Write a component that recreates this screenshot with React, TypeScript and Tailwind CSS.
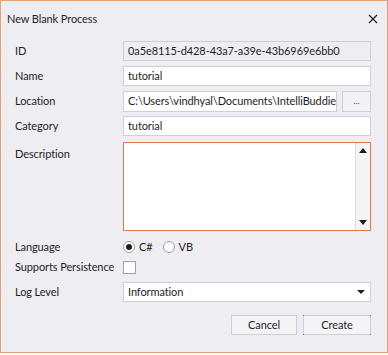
import React from "react";

const font = { fontFamily: 'Lato, "Noto Sans", sans-serif' };

function Label({ children, top = false }: { children: React.ReactNode; top?: boolean }) {
  return (
    <div className={`w-[108px] shrink-0 whitespace-nowrap ${top ? "pt-[4px]" : "flex items-center"}`}>
      {children}
    </div>
  );
}

function Field({ value, disabled = false, className = "" }: { value: string; disabled?: boolean; className?: string }) {
  return (
    <div
      className={`h-[20px] border border-[#ccced8] flex items-center pl-[4px] overflow-hidden whitespace-nowrap ${
        disabled ? "bg-[#eeeef2]" : "bg-white"
      } ${className}`}
    >
      {value}
    </div>
  );
}

export default function App() {
  return (
    <div className="w-[388px] h-[355px] bg-white text-[#1e1e1e] text-[11px] tracking-[-0.1px]" style={font}>
      <div className="w-[388px] h-[353px] border border-[#e3a27a] bg-[#eeeef2] flex flex-col">
        {/* Title bar */}
        <div className="h-[36px] flex items-center justify-between pl-[6px] pr-[9px]">
          <span>New Blank Process</span>
          <svg width="10" height="10" viewBox="0 0 10 10">
            <path d="M1 1 L9 9 M9 1 L1 9" stroke="#1e1e1e" strokeWidth="1.2" />
          </svg>
        </div>

        <div className="flex flex-col pl-[14px] pr-[16px] mt-[4px]">
          <div className="flex h-[20px]">
            <Label>ID</Label>
            <Field value="0a5e8115-d428-43a7-a39e-43b6969e6bb0" disabled className="flex-1" />
          </div>

          <div className="flex h-[20px] mt-[5px]">
            <Label>Name</Label>
            <Field value="tutorial" className="flex-1" />
          </div>

          <div className="flex h-[21px] mt-[5px]">
            <Label>Location</Label>
            <Field value="C:\Users\vindhyal\Documents\IntelliBuddies\" className="flex-1 min-w-0 h-[21px]" />
            <div className="w-[29px] shrink-0 h-[21px] ml-[5px] border border-[#ccced8] bg-[#f2f2f5] flex items-center justify-center text-[9px] text-[#555] pb-[2px]">
              ...
            </div>
          </div>

          <div className="flex h-[20px] mt-[4px]">
            <Label>Category</Label>
            <Field value="tutorial" className="flex-1" />
          </div>

          <div className="flex h-[89px] mt-[6px]">
            <Label top>Description</Label>
            <div className="flex-1 border border-[#e07b45] bg-white flex">
              <div className="flex-1" />
              <div className="w-[15px] bg-[#f4f4f6] border-l border-[#d9d9e0] flex flex-col items-center justify-between py-[5px]">
                <svg width="8" height="5" viewBox="0 0 8 5">
                  <path d="M0 5 L4 0 L8 5 Z" fill="#1e1e1e" />
                </svg>
                <svg width="8" height="5" viewBox="0 0 8 5">
                  <path d="M0 0 L4 5 L8 0 Z" fill="#1e1e1e" />
                </svg>
              </div>
            </div>
          </div>

          <div className="flex h-[16px] mt-[8px]">
            <Label>Language</Label>
            <div className="flex items-center">
              <div className="w-[12px] h-[12px] rounded-full border border-[#a0a0a8] bg-white flex items-center justify-center">
                <div className="w-[6px] h-[6px] rounded-full bg-[#1e1e1e]" />
              </div>
              <span className="ml-[4px]">C#</span>
              <div className="w-[12px] h-[12px] rounded-full border border-[#a0a0a8] bg-white ml-[10px]" />
              <span className="ml-[4px]">VB</span>
            </div>
          </div>

          <div className="flex h-[13px] mt-[6px]">
            <Label>Supports Persistence</Label>
            <div className="w-[13px] h-[13px] border border-[#a0a0a8] bg-white" />
          </div>

          <div className="flex h-[20px] mt-[8px]">
            <Label>Log Level</Label>
            <div className="flex-1 h-[20px] border border-[#ccced8] bg-white flex items-center justify-between pl-[4px] pr-[5px]">
              <span>Information</span>
              <svg width="8" height="4" viewBox="0 0 8 4">
                <path d="M0 0 L4 4 L8 0 Z" fill="#1e1e1e" />
              </svg>
            </div>
          </div>

          <div className="flex justify-end gap-[6px] mt-[13px]">
            <div className="w-[66px] h-[20px] border border-[#ccced8] bg-[#f4f4f6] flex items-center justify-center">
              Cancel
            </div>
            <div className="relative w-[68px] h-[20px] border border-[#ccced8] bg-[#f4f4f6] flex items-center justify-center">
              Create
              <span className="absolute -left-px -top-px w-px h-px bg-[#3b8bd8]" />
              <span className="absolute -right-px -top-px w-px h-px bg-[#3b8bd8]" />
              <span className="absolute -left-px -bottom-px w-px h-px bg-[#3b8bd8]" />
              <span className="absolute -right-px -bottom-px w-px h-px bg-[#3b8bd8]" />
            </div>
          </div>
        </div>
      </div>
    </div>
  );
}
